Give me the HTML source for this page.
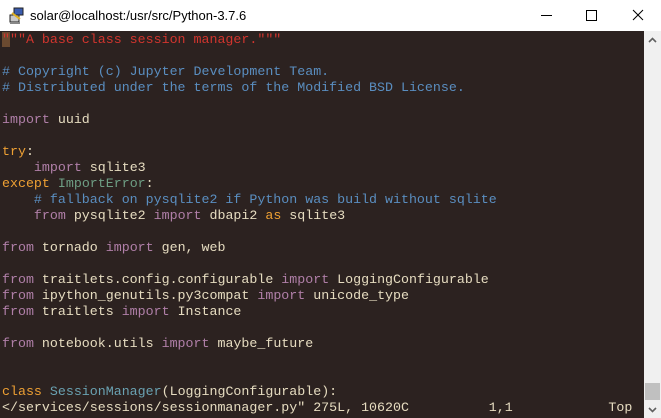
<!DOCTYPE html>
<html><head><meta charset="utf-8"><style>
html,body{margin:0;padding:0;width:661px;height:418px;overflow:hidden;background:#fff;}
.title{position:absolute;left:0;top:0;width:661px;height:31px;background:#fff;font-family:"Liberation Sans",sans-serif;font-size:13px;color:#000;}
.title .t{position:absolute;left:30px;top:8px;}
.term{position:absolute;left:0;top:31px;width:644px;height:387px;background:#2c2220;}
pre{margin:0;position:absolute;left:2px;top:1px;font-family:"Liberation Mono","DejaVu Sans Mono",monospace;font-size:13.3px;line-height:16px;color:#e6dcc0;}
.k{color:#b07fa8}.o{color:#eea033}.c{color:#5a8ec0}.s{color:#d2352e}.g{color:#6e9e84}.n{color:#6aa2b2}
.sb{position:absolute;left:644px;top:31px;width:17px;height:387px;background:#f0f0f0;}
.cur{background:#6b4a30;color:#d2352e}
</style></head><body>
<div class="title">
<svg style="position:absolute;left:8px;top:7px" width="18" height="18" viewBox="0 0 18 18"><rect x="6" y="1" width="9" height="7" fill="#3a5cae" stroke="#222" stroke-width="1"/><rect x="2" y="8" width="9" height="7" fill="#c8c8c8" stroke="#222"/><path d="M4 6 L12 12" stroke="#e0b020" stroke-width="2"/><rect x="2" y="15" width="10" height="2" fill="#888"/></svg>
<span class="t">solar@localhost:/usr/src/Python-3.7.6</span>
<div style="position:absolute;left:541px;top:15px;width:11px;height:1px;background:#000"></div>
<div style="position:absolute;left:586px;top:10px;width:9px;height:9px;border:1px solid #000"></div>
<svg style="position:absolute;left:632px;top:9px" width="12" height="12"><path d="M1 1L11 11M11 1L1 11" stroke="#000" stroke-width="1"/></svg>
</div>
<div class="term">
<pre><span class="cur">"</span><span class="s">""A base class session manager."""</span>

<span class="c"># Copyright (c) Jupyter Development Team.</span>
<span class="c"># Distributed under the terms of the Modified BSD License.</span>

<span class="k">import</span> uuid

<span class="o">try</span>:
    <span class="k">import</span> sqlite3
<span class="o">except</span> <span class="g">ImportError</span>:
    <span class="c"># fallback on pysqlite2 if Python was build without sqlite</span>
    <span class="k">from</span> pysqlite2 <span class="k">import</span> dbapi2 <span class="o">as</span> sqlite3

<span class="k">from</span> tornado <span class="k">import</span> gen, web

<span class="k">from</span> traitlets.config.configurable <span class="k">import</span> LoggingConfigurable
<span class="k">from</span> ipython_genutils.py3compat <span class="k">import</span> unicode_type
<span class="k">from</span> traitlets <span class="k">import</span> Instance

<span class="k">from</span> notebook.utils <span class="k">import</span> maybe_future


<span class="o">class</span> <span class="n">SessionManager</span>(LoggingConfigurable):
&lt;/services/sessions/sessionmanager.py" 275L, 10620C          1,1            Top</pre>
</div>
<div class="sb">
<svg style="position:absolute;left:4px;top:6px" width="9" height="6"><path d="M1 5L4.5 1.5L8 5" stroke="#606060" stroke-width="1.6" fill="none"/></svg>
<div style="position:absolute;left:1px;top:352px;width:15px;height:17px;background:#c0c0c0"></div>
<svg style="position:absolute;left:4px;top:376px" width="9" height="6"><path d="M1 1L4.5 4.5L8 1" stroke="#606060" stroke-width="1.6" fill="none"/></svg>
</div>
</body></html>
